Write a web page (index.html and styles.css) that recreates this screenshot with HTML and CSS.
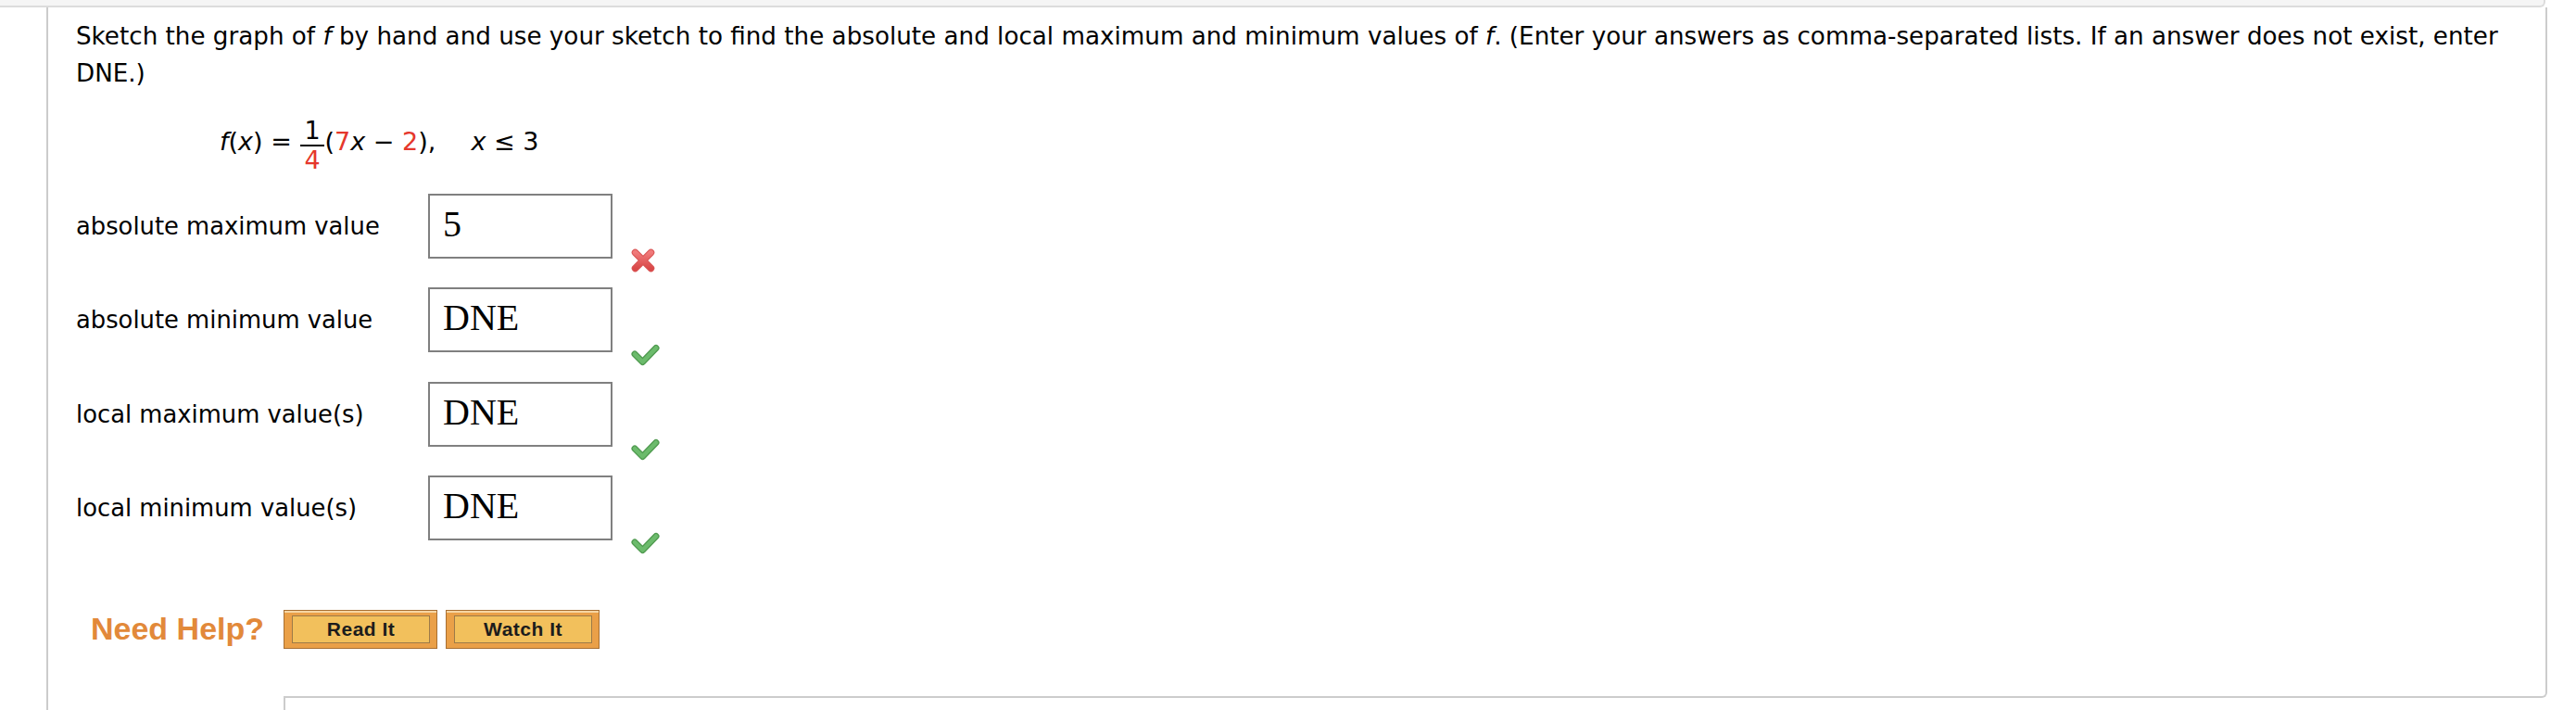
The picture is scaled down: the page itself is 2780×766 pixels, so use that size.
FILE: index.html
```html
<!DOCTYPE html>
<html lang="en">
<head>
<meta charset="utf-8">
<title>Question</title>
<link rel="stylesheet" href="styles.css">
</head>
<body>
<div class="topband"></div>
<div class="frame">
  <div class="card-body">
    <p class="prompt">Sketch the graph of <i>f</i> by hand and use your sketch to find the absolute and local maximum and minimum values of <i>f</i>. (Enter your answers as comma-separated lists. If an answer does not exist, enter DNE.)</p>
    <div class="formula"><i>f</i>(<i>x</i>) = <span class="frac"><span class="num">1</span><span class="den">4</span></span>(<span class="red">7</span><i>x</i> − <span class="red">2</span>),<span class="cond"><i>x</i> ≤ 3</span></div>
    <div class="answers">
      <div class="row">
        <span class="label">absolute maximum value</span>
        <span class="box">5</span>
        <svg class="mark cross" width="26" height="26" viewBox="0 0 26 26">
          <defs><linearGradient id="rg" x1="0" y1="0" x2="0" y2="1"><stop offset="0" stop-color="#f07a7a"/><stop offset="1" stop-color="#d94848"/></linearGradient></defs>
          <path d="M4.5 4.5 L21.5 21.5 M21.5 4.5 L4.5 21.5" stroke="#d85252" stroke-width="7.5" stroke-linecap="round"/>
          <path d="M4.5 4.5 L21.5 21.5 M21.5 4.5 L4.5 21.5" stroke="url(#rg)" stroke-width="5.5" stroke-linecap="round"/>
        </svg>
      </div>
      <div class="row">
        <span class="label">absolute minimum value</span>
        <span class="box">DNE</span>
        <svg class="mark check" width="31" height="24" viewBox="0 0 31 24">
          <path d="M4 11 L12.5 19.5 L27 4.5" fill="none" stroke="#4f9a4f" stroke-width="7" stroke-linecap="round" stroke-linejoin="round"/>
          <path d="M4 11 L12.5 19.5 L27 4.5" fill="none" stroke="#6cbb6c" stroke-width="4.5" stroke-linecap="round" stroke-linejoin="round"/>
        </svg>
      </div>
      <div class="row">
        <span class="label">local maximum value(s)</span>
        <span class="box">DNE</span>
        <svg class="mark check" width="31" height="24" viewBox="0 0 31 24">
          <path d="M4 11 L12.5 19.5 L27 4.5" fill="none" stroke="#4f9a4f" stroke-width="7" stroke-linecap="round" stroke-linejoin="round"/>
          <path d="M4 11 L12.5 19.5 L27 4.5" fill="none" stroke="#6cbb6c" stroke-width="4.5" stroke-linecap="round" stroke-linejoin="round"/>
        </svg>
      </div>
      <div class="row">
        <span class="label">local minimum value(s)</span>
        <span class="box">DNE</span>
        <svg class="mark check" width="31" height="24" viewBox="0 0 31 24">
          <path d="M4 11 L12.5 19.5 L27 4.5" fill="none" stroke="#4f9a4f" stroke-width="7" stroke-linecap="round" stroke-linejoin="round"/>
          <path d="M4 11 L12.5 19.5 L27 4.5" fill="none" stroke="#6cbb6c" stroke-width="4.5" stroke-linecap="round" stroke-linejoin="round"/>
        </svg>
      </div>
    </div>
    <div class="help">
      <span class="help-title">Need Help?</span>
      <a class="btn"><span class="btn-inner">Read It</span></a>
      <a class="btn"><span class="btn-inner">Watch It</span></a>
    </div>
  </div>
  <div class="card-end"></div>
  <div class="lower"></div>
</div>
</body>
</html>
```
FILE: styles.css
```css
html, body {
  margin: 0;
  background: #ffffff;
}
body {
  font-family: "DejaVu Sans", Verdana, sans-serif;
  color: #000000;
}
.topband {
  width: 2747px;
  height: 8px;
  box-sizing: border-box;
  background: #f5f5f5;
  border-bottom: 2px solid #dcdcdc;
  border-right: 2px solid #dcdcdc;
  border-bottom-right-radius: 6px;
}
.frame {
  margin-left: 50px;
  width: 2697px;
  border-left: 2px solid #cccccc;
}
.card-body {
  border-right: 2px solid #cccccc;
  padding: 11px 30px 45px 30px;
}
.prompt {
  margin: 0;
  font-size: 26.2px;
  line-height: 40px;
}
.formula {
  margin-top: 29px;
  padding-left: 155px;
  font-size: 27px;
  line-height: 40px;
  white-space: nowrap;
}
.red {
  color: #e5372c;
}
.frac {
  display: inline-block;
  vertical-align: -20px;
  text-align: center;
  margin: 0 1px 0 1px;
}
.num {
  display: block;
  line-height: 26px;
  padding: 0 4px 2px;
  border-bottom: 2px solid #000000;
}
.den {
  display: block;
  line-height: 26px;
  padding-top: 2px;
  color: #e5372c;
}
.cond {
  margin-left: 38px;
}
.answers {
  margin-top: 23px;
  display: flex;
  flex-direction: column;
  gap: 31.33px;
}
.row {
  display: flex;
  align-items: center;
  height: 70px;
}
.label {
  width: 380px;
  font-size: 25.8px;
}
.box {
  width: 199px;
  height: 70px;
  box-sizing: border-box;
  border: 2px solid #808080;
  padding: 7px 0 0 14px;
  font-family: "Liberation Serif", "Times New Roman", serif;
  font-size: 40px;
  line-height: normal;
}
.mark {
  align-self: flex-end;
  margin-bottom: -15px;
  margin-left: 20px;
}
.help {
  display: flex;
  align-items: center;
  margin-top: 75px;
  padding-left: 16px;
  height: 42px;
}
.help-title {
  font-family: "Liberation Sans", Arial, sans-serif;
  font-weight: bold;
  font-size: 34px;
  color: #e2893a;
  margin-right: 21px;
}
.btn {
  display: block;
  width: 166px;
  height: 42px;
  box-sizing: border-box;
  border: 1px solid #a86f32;
  background: #eaa048;
  box-shadow: inset 0 2px 0 #f6d6a4;
  padding: 5px 7px 5px 8px;
  margin-right: 9px;
}
.btn-inner {
  display: flex;
  height: 100%;
  box-sizing: border-box;
  border: 1px solid #9c7a48;
  background: #f2c05c;
  align-items: center;
  justify-content: center;
  font-family: "Liberation Sans", Arial, sans-serif;
  font-weight: bold;
  font-size: 21px;
  letter-spacing: 0.5px;
  color: #1c1c1c;
}
.card-end {
  height: 6px;
  margin-left: 254px;
  border-right: 2px solid #cccccc;
  border-bottom: 2px solid #cccccc;
  border-bottom-right-radius: 6px;
}
.lower {
  margin-left: 254px;
  height: 40px;
  border-left: 2px solid #cccccc;
}
```
